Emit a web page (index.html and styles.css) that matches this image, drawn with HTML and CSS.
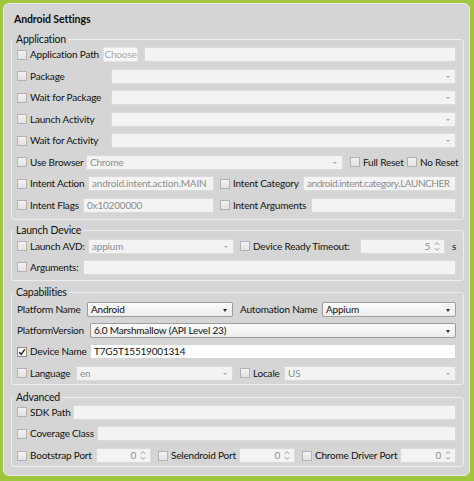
FILE: index.html
```html
<!DOCTYPE html>
<html>
<head>
<meta charset="utf-8">
<link rel="stylesheet" href="styles.css">
</head>
<body>
<div class="frame">
  <div class="panel">
    <div class="title">Android Settings</div>

    <fieldset class="grp grp-app">
      <legend>Application</legend>
      <div class="row">
        <span class="cb"></span><span class="lbl w73">Application Path</span>
        <span class="btn">Choose</span>
        <span class="field grow"></span>
      </div>
      <div class="row">
        <span class="cb"></span><span class="lbl w81">Package</span>
        <span class="field sel grow"></span>
      </div>
      <div class="row">
        <span class="cb"></span><span class="lbl w81">Wait for Package</span>
        <span class="field sel grow"></span>
      </div>
      <div class="row">
        <span class="cb"></span><span class="lbl w81">Launch Activity</span>
        <span class="field sel grow"></span>
      </div>
      <div class="row">
        <span class="cb"></span><span class="lbl w81">Wait for Activity</span>
        <span class="field sel grow"></span>
      </div>
      <div class="row">
        <span class="cb"></span><span class="lbl w56">Use Browser</span>
        <span class="field sel grow">Chrome</span>
        <span class="cb ml7"></span><span class="lbl w44">Full Reset</span>
        <span class="cb"></span><span class="lbl w36">No Reset</span>
      </div>
      <div class="row">
        <span class="cb"></span><span class="lbl w58">Intent Action</span>
        <span class="field w126">android.intent.action.MAIN</span>
        <span class="cb ml6"></span><span class="lbl w70">Intent Category</span>
        <span class="field grow tight">android.intent.category.LAUNCHER</span>
      </div>
      <div class="row">
        <span class="cb"></span><span class="lbl w53">Intent Flags</span>
        <span class="field w131">0x10200000</span>
        <span class="cb ml6"></span><span class="lbl w78">Intent Arguments</span>
        <span class="field grow"></span>
      </div>
    </fieldset>

    <fieldset class="grp grp-launch">
      <legend>Launch Device</legend>
      <div class="row">
        <span class="cb"></span><span class="lbl w58">Launch AVD:</span>
        <span class="field sel w146">appium</span>
        <span class="cb ml6"></span><span class="lbl w107">Device Ready Timeout:</span>
        <span class="field spin w85"><span class="num">5</span><svg class="ud" width="6" height="11" viewBox="0 0 6 11"><polyline points="0.8,4 3,1.6 5.2,4"/><polyline points="0.8,7 3,9.4 5.2,7"/></svg></span>
        <span class="lbl unit">s</span>
      </div>
      <div class="row">
        <span class="cb"></span><span class="lbl w53">Arguments:</span>
        <span class="field grow"></span>
      </div>
    </fieldset>

    <fieldset class="grp grp-cap">
      <legend>Capabilities</legend>
      <div class="row">
        <span class="lbl w70">Platform Name</span>
        <span class="field sel on w146">Android</span>
        <span class="lbl ml7 w82">Automation Name</span>
        <span class="field sel on grow">Appium</span>
      </div>
      <div class="row">
        <span class="lbl w73">PlatformVersion</span>
        <span class="field sel on grow">6.0 Marshmallow (API Level 23)</span>
      </div>
      <div class="row">
        <span class="cb checked"><svg width="8" height="8" viewBox="0 0 8 8"><polyline points="1.2,4.2 3.2,6.3 6.8,1.4"/></svg></span><span class="lbl w60">Device Name</span>
        <span class="field white grow">T7G5T15519001314</span>
      </div>
      <div class="row">
        <span class="cb"></span><span class="lbl w46">Language</span>
        <span class="field sel w157">en</span>
        <span class="cb ml7"></span><span class="lbl w31">Locale</span>
        <span class="field sel grow">US</span>
      </div>
    </fieldset>

    <fieldset class="grp grp-adv">
      <legend>Advanced</legend>
      <div class="row">
        <span class="cb"></span><span class="lbl w43">SDK Path</span>
        <span class="field grow"></span>
      </div>
      <div class="row">
        <span class="cb"></span><span class="lbl w67">Coverage Class</span>
        <span class="field grow"></span>
      </div>
      <div class="row">
        <span class="cb"></span><span class="lbl w66">Bootstrap Port</span>
        <span class="field spin w55"><span class="num">0</span><svg class="ud" width="6" height="11" viewBox="0 0 6 11"><polyline points="0.8,4 3,1.6 5.2,4"/><polyline points="0.8,7 3,9.4 5.2,7"/></svg></span>
        <span class="cb ml7"></span><span class="lbl w68">Selendroid Port</span>
        <span class="field spin w56"><span class="num">0</span><svg class="ud" width="6" height="11" viewBox="0 0 6 11"><polyline points="0.8,4 3,1.6 5.2,4"/><polyline points="0.8,7 3,9.4 5.2,7"/></svg></span>
        <span class="cb ml7"></span><span class="lbl w85">Chrome Driver Port</span>
        <span class="field spin grow"><span class="num">0</span><svg class="ud" width="6" height="11" viewBox="0 0 6 11"><polyline points="0.8,4 3,1.6 5.2,4"/><polyline points="0.8,7 3,9.4 5.2,7"/></svg></span>
      </div>
    </fieldset>
  </div>
</div>
</body>
</html>
```
FILE: styles.css
```css
* { box-sizing: border-box; }
html, body { margin: 0; padding: 0; }
body {
  width: 474px;
  height: 481px;
  overflow: hidden;
  background: #9fc63d;
  font-family: Lato, "Open Sans", sans-serif;
  font-size: 10px;
  letter-spacing: -0.2px;
  color: #111;
}
.frame {
  height: 481px;
  padding: 3px 4px 5px 3px;
}
.panel {
  height: 100%;
  background: #d5d5d5;
  border: 1px solid #e9e9e9;
  border-radius: 6px;
  padding: 8px 5px 0 7px;
  display: flex;
  flex-direction: column;
}
.title {
  font-weight: bold;
  font-size: 10.5px;
  letter-spacing: -0.1px;
  line-height: 14px;
  padding-left: 3px;
  color: #0c0c0c;
}
.grp {
  margin: 0;
  border: 1px solid #ececec;
  border-radius: 3px;
  padding: 0 7px 0 5px;
  min-width: 0;
}
.grp legend {
  padding: 0 2px;
  margin-left: -3px;
  line-height: 13px;
  font-size: 10.5px;
  color: #111;
}
.grp-app { margin-top: 7px; padding-top: 1px; padding-bottom: 6px; }
.grp-app .row + .row { margin-top: 6.5px; }
.grp-launch { margin-top: 4px; padding-top: 2px; padding-bottom: 5px; }
.grp-launch .row + .row { margin-top: 6px; }
.grp-cap { margin-top: 5px; padding-top: 3px; padding-bottom: 3px; }
.grp-cap .row + .row { margin-top: 6.4px; }
.grp-adv { margin-top: 6px; padding-top: 1px; padding-bottom: 3px; }
.grp-adv .row + .row { margin-top: 6.8px; }

.row {
  display: flex;
  align-items: center;
  height: 15px;
}
.cb {
  flex: none;
  width: 10px;
  height: 10px;
  border: 1px solid #b3b3b3;
  background: linear-gradient(#f2f2f2, #e2e2e2);
  margin-right: 3px;
  display: flex;
  align-items: center;
  justify-content: center;
}
.cb.checked {
  border-color: #8e8e8e;
  background: #f7f7f7;
}
.cb.checked svg polyline {
  fill: none;
  stroke: #222;
  stroke-width: 1.4;
}
.lbl {
  flex: none;
  white-space: nowrap;
  overflow: visible;
  line-height: 15px;
}
.field {
  flex: none;
  position: relative;
  height: 15px;
  background: #f3f3f3;
  border: 1px solid #dadada;
  color: #8e8e8e;
  padding-left: 3px;
  line-height: 13px;
  white-space: nowrap;
  overflow: hidden;
}
.tight { letter-spacing: -0.45px; }
.grow { flex: 1 1 auto; min-width: 0; }
.sel::after {
  content: "";
  position: absolute;
  right: 5px;
  top: 6px;
  width: 0;
  height: 0;
  border-left: 2px solid transparent;
  border-right: 2px solid transparent;
  border-top: 2.5px solid #a9a9a9;
}
.sel.on {
  background: linear-gradient(#fcfcfc, #ececec);
  border-color: #9c9c9c;
  border-radius: 2px;
  color: #111;
}
.sel.on::after {
  border-left-width: 2.5px;
  border-right-width: 2.5px;
  border-top: 3px solid #2a2a2a;
  right: 5px;
}
.white {
  background: #ffffff;
  border-color: #d4d4d4;
  color: #111;
}
.btn {
  flex: none;
  width: 35px;
  height: 15px;
  margin-right: 6px;
  background: #f6f6f6;
  border: 1px solid #e2e2e2;
  color: #a8a8a8;
  text-align: center;
  line-height: 13px;
}
.spin {
  display: flex;
  align-items: center;
  justify-content: flex-end;
  padding-right: 4px;
}
.spin .num { color: #8e8e8e; }
.ud { margin-left: 4px; }
.ud polyline {
  fill: none;
  stroke: #9a9a9a;
  stroke-width: 0.9;
}
.unit { margin-left: 7px; width: 4px; }
.ml6 { margin-left: 6px; }
.ml7 { margin-left: 7px; }
.w31 { width: 31px; }
.w36 { width: 36px; }
.w43 { width: 43px; }
.w44 { width: 44px; }
.w46 { width: 46px; }
.w53 { width: 53px; }
.w55 { width: 55px; }
.w56 { width: 56px; }
.w58 { width: 58px; }
.w60 { width: 60px; }
.w66 { width: 66px; }
.w67 { width: 67px; }
.w68 { width: 68px; }
.w70 { width: 70px; }
.w73 { width: 73px; }
.w78 { width: 78px; }
.w81 { width: 81px; }
.w82 { width: 82px; }
.w85 { width: 85px; }
.w107 { width: 107px; }
.w126 { width: 126px; }
.w131 { width: 131px; }
.w146 { width: 146px; }
.w157 { width: 157px; }
```
